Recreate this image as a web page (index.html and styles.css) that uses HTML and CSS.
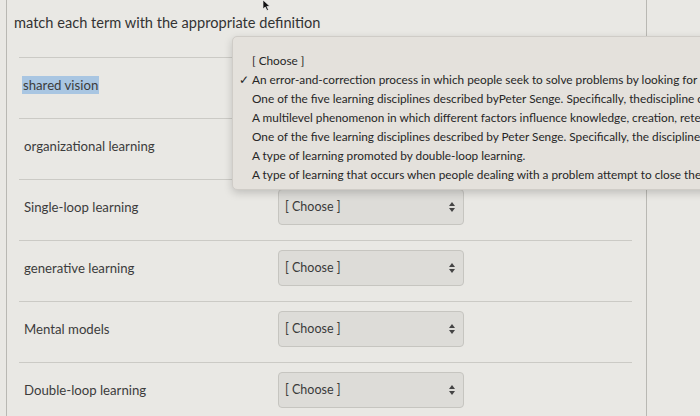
FILE: index.html
```html
<!DOCTYPE html>
<html>
<head>
<meta charset="utf-8">
<link rel="stylesheet" href="styles.css">
</head>
<body>
<div class="page">
  <div class="question">
    <div class="title">match each term with the appropriate definition</div>
    <div class="rows">
      <div class="row">
        <div class="term"><span class="selected">shared vision</span></div>
        <div class="select"><span>[ Choose ]</span><svg class="arrows" viewBox="0 0 6 10"><path d="M3 0 L6 4 L0 4 Z M0 6 L6 6 L3 10 Z"/></svg></div>
      </div>
      <div class="row">
        <div class="term">organizational learning</div>
        <div class="select"><span>[ Choose ]</span><svg class="arrows" viewBox="0 0 6 10"><path d="M3 0 L6 4 L0 4 Z M0 6 L6 6 L3 10 Z"/></svg></div>
      </div>
      <div class="row">
        <div class="term">Single-loop learning</div>
        <div class="select"><span>[ Choose ]</span><svg class="arrows" viewBox="0 0 6 10"><path d="M3 0 L6 4 L0 4 Z M0 6 L6 6 L3 10 Z"/></svg></div>
      </div>
      <div class="row">
        <div class="term">generative learning</div>
        <div class="select"><span>[ Choose ]</span><svg class="arrows" viewBox="0 0 6 10"><path d="M3 0 L6 4 L0 4 Z M0 6 L6 6 L3 10 Z"/></svg></div>
      </div>
      <div class="row">
        <div class="term">Mental models</div>
        <div class="select"><span>[ Choose ]</span><svg class="arrows" viewBox="0 0 6 10"><path d="M3 0 L6 4 L0 4 Z M0 6 L6 6 L3 10 Z"/></svg></div>
      </div>
      <div class="row">
        <div class="term">Double-loop learning</div>
        <div class="select"><span>[ Choose ]</span><svg class="arrows" viewBox="0 0 6 10"><path d="M3 0 L6 4 L0 4 Z M0 6 L6 6 L3 10 Z"/></svg></div>
      </div>
    </div>
  </div>

  <ul class="menu">
    <li>[ Choose ]</li>
    <li class="checked">An error-and-correction process in which people seek to solve problems by looking for solutions</li>
    <li>One of the five learning disciplines described byPeter Senge. Specifically, thediscipline of building</li>
    <li>A multilevel phenomenon in which different factors influence knowledge, creation, retention</li>
    <li>One of the five learning disciplines described by Peter Senge. Specifically, the discipline of</li>
    <li>A type of learning promoted by double-loop learning.</li>
    <li>A type of learning that occurs when people dealing with a problem attempt to close the gap</li>
  </ul>

  <svg class="cursor" viewBox="0 0 8 11"><path d="M0 0 L0 9 L2.2 7 L4 10.5 L5.5 9.8 L3.8 6.5 L6.8 6.3 Z" fill="#111" stroke="#fff" stroke-width="0.6"/></svg>
</div>
</body>
</html>
```

FILE: styles.css
```css
html, body {
  margin: 0;
  padding: 0;
}

body {
  width: 700px;
  height: 416px;
  overflow: hidden;
  font-family: Lato, "Open Sans", sans-serif;
  color: #3a3a3a;
}

.page {
  position: relative;
  width: 700px;
  height: 416px;
  background: #e9e8e4;
  overflow: hidden;
}

.question {
  margin-left: 6px;
  width: 641px;
  height: 416px;
  border-left: 1px solid #b9b8b3;
  border-right: 1px solid #b9b8b3;
  box-sizing: border-box;
}

.title {
  padding: 13px 0 0 7px;
  font-size: 14.6px;
  line-height: 20px;
  color: #333;
}

.rows {
  margin-top: 24px;
  margin-left: 12px;
  margin-right: 14px;
}

.row {
  display: flex;
  align-items: center;
  height: 61px;
  padding-bottom: 7px;
  border-top: 1px solid #cbcac5;
  box-sizing: border-box;
}

.term {
  width: 254px;
  padding-left: 5px;
  font-size: 13.2px;
  color: #3c3c3c;
}

.selected {
  background: #a9c6e2;
  padding: 1px 1px;
  margin-left: -2px;
}

.select {
  display: flex;
  align-items: center;
  justify-content: space-between;
  width: 186px;
  height: 36px;
  padding: 0 8px 0 6px;
  box-sizing: border-box;
  background: #dddcd8;
  border: 1px solid #c6c5c0;
  border-radius: 4px;
  font-size: 12.5px;
  color: #3a3a3a;
}

.arrows {
  width: 6px;
  height: 10px;
  fill: #444;
}

.menu {
  position: absolute;
  left: 232px;
  top: 36px;
  width: 500px;
  height: 154px;
  margin: 0;
  padding: 14px 0 0 19px;
  box-sizing: border-box;
  list-style: none;
  background: #e4e1dc;
  border: 1px solid #cfccc7;
  border-radius: 5px;
  box-shadow: 0 3px 8px rgba(0, 0, 0, 0.18);
  font-size: 11.8px;
  line-height: 19px;
  color: #262626;
  white-space: nowrap;
  overflow: hidden;
}

.menu li {
  position: relative;
}

.menu li.checked::before {
  content: "\2713";
  position: absolute;
  left: -13px;
  top: 0;
  font-size: 12px;
}

.cursor {
  position: absolute;
  left: 263px;
  top: 0;
  width: 8px;
  height: 11px;
}
```
